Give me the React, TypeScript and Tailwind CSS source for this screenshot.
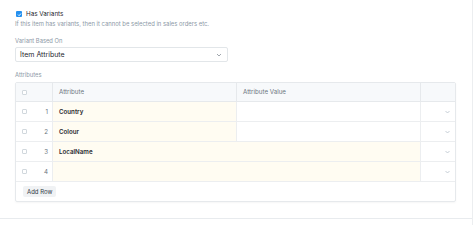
import React from "react";

const rows = [
  { idx: 1, attr: "Country", merged: false },
  { idx: 2, attr: "Colour", merged: false },
  { idx: 3, attr: "LocalName", merged: true },
  { idx: 4, attr: "", merged: true },
];

function Box() {
  return <span className="block h-[5px] w-[5px] rounded-[1px] border border-[#d1d8dd] bg-white" />;
}

function Caret() {
  return (
    <svg width="5" height="4" viewBox="0 0 10 8" className="text-[#b8c2cc]">
      <path d="M1 2 L5 6 L9 2" fill="none" stroke="currentColor" strokeWidth="1.6" />
    </svg>
  );
}

export default function App() {
  return (
    <div className="flex h-[225px] w-[474px] bg-white font-['Inter',sans-serif] text-[#1f272e]">
      <div className="h-[225px] w-[473px] border-r border-[#eceef0]">
        <div className="flex h-[219px] flex-col border-b border-[#e8ebee] pl-[15px] pt-[10px]">
          {/* Has Variants */}
          <label className="flex h-[8px] items-center gap-[4px] pl-[1px]">
            <span className="flex h-[6px] w-[6px] items-center justify-center rounded-[1px] bg-[#2490ef]">
              <svg width="5" height="5" viewBox="0 0 10 10">
                <path d="M2 5.2 L4.2 7.4 L8 3" fill="none" stroke="white" strokeWidth="1.8" />
              </svg>
            </span>
            <span className="text-[6.3px] leading-[8px]">Has Variants</span>
          </label>
          <p className="mt-[2px] h-[8px] text-[5.9px] leading-[8px] text-[#8d99a6]">
            If this item has variants, then it cannot be selected in sales orders etc.
          </p>

          {/* Variant Based On */}
          <p className="mt-[9px] h-[8px] text-[5.8px] leading-[8px] text-[#8d99a6]">Variant Based On</p>
          <div className="mt-[2px] flex h-[15px] w-[213px] items-center justify-between rounded-[2px] border border-[#e2e6e9] bg-white pl-[4px] pr-[5px]">
            <span className="text-[7px] leading-[8px]">Item Attribute</span>
            <svg width="6" height="4" viewBox="0 0 12 8">
              <path d="M2 2 L6 6 L10 2" fill="none" stroke="#6c7680" strokeWidth="1.3" />
            </svg>
          </div>

          {/* Attributes table */}
          <p className="mt-[9px] h-[8px] text-[5.8px] leading-[8px] text-[#8d99a6]">Attributes</p>
          <div className="mt-[3px] w-[441px] rounded-[2px] border border-[#e6e9ec] shadow-[0_1px_2px_rgba(0,0,0,0.04)]">
            <div className="grid h-[19px] grid-cols-[36px_184px_184px_1fr] border-b border-[#e6e9ec] bg-[#f7f9fb] text-[6.2px] text-[#6c7680]">
              <div className="flex items-center pl-[6px]">
                <Box />
              </div>
              <div className="flex items-center border-l border-[#e6e9ec] pl-[6px]">Attribute</div>
              <div className="flex items-center border-l border-[#e6e9ec] pl-[6px]">Attribute Value</div>
              <div className="border-l border-[#e6e9ec]" />
            </div>
            {rows.map((r) => (
              <div
                key={r.idx}
                className="grid h-[20px] grid-cols-[36px_184px_184px_1fr] border-b border-[#eceef0] text-[6.2px]"
              >
                <div className="flex items-center justify-between pl-[6px] pr-[4px] text-[#6c7680]">
                  <Box />
                  <span>{r.idx}</span>
                </div>
                {r.merged ? (
                  <div className="col-span-2 flex items-center border-l border-[#eceef0] bg-[#fffcf2] pl-[6px] font-semibold">
                    {r.attr}
                  </div>
                ) : (
                  <>
                    <div className="flex items-center border-l border-[#eceef0] bg-[#fffcf2] pl-[6px] font-semibold">
                      {r.attr}
                    </div>
                    <div className="border-l border-[#eceef0] bg-white" />
                  </>
                )}
                <div className="flex items-center justify-end border-l border-[#eceef0] pr-[5px]">
                  <Caret />
                </div>
              </div>
            ))}
            <div className="flex h-[19px] items-center pl-[7px]">
              <button className="h-[11px] rounded-[2px] bg-[#f0f2f4] px-[4px] text-[6px] leading-[11px] text-[#333c44]">
                Add Row
              </button>
            </div>
          </div>
        </div>
      </div>
    </div>
  );
}
